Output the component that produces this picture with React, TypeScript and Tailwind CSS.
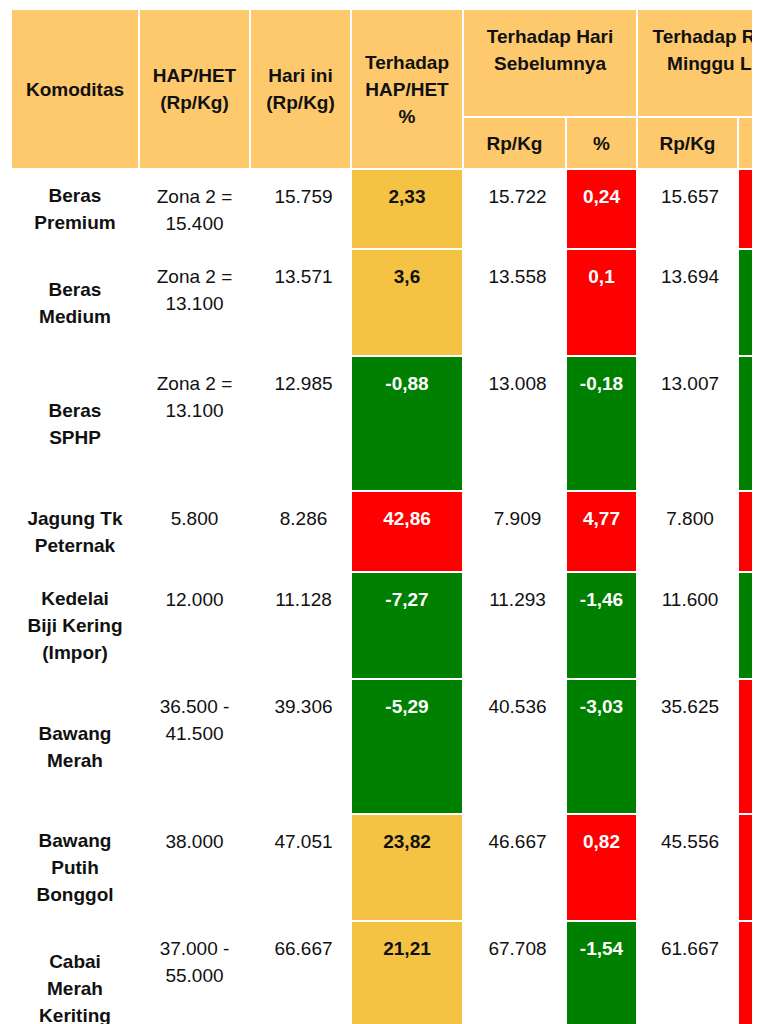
import React from "react"

type Tone = "yellow" | "red" | "green"

interface Pct {
  v: string
  tone: Tone
}

interface Row {
  name: string[]
  hap: string[]
  today: string
  het: Pct
  prev: string
  prevPct: Pct
  week: string
  weekPct: Pct
  h: string
}

const rows: Row[] = [
  { name: ["Beras", "Premium"], hap: ["Zona 2 =", "15.400"], today: "15.759", het: { v: "2,33", tone: "yellow" }, prev: "15.722", prevPct: { v: "0,24", tone: "red" }, week: "15.657", weekPct: { v: "0,65", tone: "red" }, h: "h-[78px]" },
  { name: ["Beras", "Medium"], hap: ["Zona 2 =", "13.100"], today: "13.571", het: { v: "3,6", tone: "yellow" }, prev: "13.558", prevPct: { v: "0,1", tone: "red" }, week: "13.694", weekPct: { v: "-0,9", tone: "green" }, h: "h-[105px]" },
  { name: ["Beras", "SPHP"], hap: ["Zona 2 =", "13.100"], today: "12.985", het: { v: "-0,88", tone: "green" }, prev: "13.008", prevPct: { v: "-0,18", tone: "green" }, week: "13.007", weekPct: { v: "-0,17", tone: "green" }, h: "h-[133px]" },
  { name: ["Jagung Tk", "Peternak"], hap: ["5.800"], today: "8.286", het: { v: "42,86", tone: "red" }, prev: "7.909", prevPct: { v: "4,77", tone: "red" }, week: "7.800", weekPct: { v: "6,23", tone: "red" }, h: "h-[79px]" },
  { name: ["Kedelai", "Biji Kering", "(Impor)"], hap: ["12.000"], today: "11.128", het: { v: "-7,27", tone: "green" }, prev: "11.293", prevPct: { v: "-1,46", tone: "green" }, week: "11.600", weekPct: { v: "-4,07", tone: "green" }, h: "h-[105px]" },
  { name: ["Bawang", "Merah"], hap: ["36.500 -", "41.500"], today: "39.306", het: { v: "-5,29", tone: "green" }, prev: "40.536", prevPct: { v: "-3,03", tone: "green" }, week: "35.625", weekPct: { v: "10,3", tone: "red" }, h: "h-[133px]" },
  { name: ["Bawang", "Putih", "Bonggol"], hap: ["38.000"], today: "47.051", het: { v: "23,82", tone: "yellow" }, prev: "46.667", prevPct: { v: "0,82", tone: "red" }, week: "45.556", weekPct: { v: "3,28", tone: "red" }, h: "h-[105px]" },
  { name: ["Cabai", "Merah", "Keriting"], hap: ["37.000 -", "55.000"], today: "66.667", het: { v: "21,21", tone: "yellow" }, prev: "67.708", prevPct: { v: "-1,54", tone: "green" }, week: "61.667", weekPct: { v: "8,11", tone: "red" }, h: "h-[133px]" },
]

const toneClass: Record<Tone, string> = {
  yellow: "bg-[#f5c344] text-[#111]",
  red: "bg-[#ff0000] text-white",
  green: "bg-[#008000] text-white",
}

const head = "bg-[#fec96c] font-bold text-[#111] text-center"
const cell = "align-top text-center pt-[13px] px-0"

function Lines({ items }: { items: string[] }) {
  return (
    <>
      {items.map((t, i) => (
        <React.Fragment key={i}>
          {i > 0 && <br />}
          {t}
        </React.Fragment>
      ))}
    </>
  )
}

function PctCell({ p }: { p: Pct }) {
  return <td className={`${cell} font-bold ${toneClass[p.tone]}`}>{p.v}</td>
}

export default function App() {
  return (
    <div className="min-h-screen bg-white pl-[10px] pt-[8px] font-['Liberation_Sans',Arial,sans-serif] text-[19px] leading-[27px] text-[#111]">
      <div className="w-[742px] overflow-hidden">
        <table className="table-fixed border-separate border-spacing-[2px] w-[800px]">
          <colgroup>
            <col className="w-[126px]" />
            <col className="w-[109px]" />
            <col className="w-[99px]" />
            <col className="w-[110px]" />
            <col className="w-[101px]" />
            <col className="w-[69px]" />
            <col className="w-[99px]" />
            <col className="w-[69px]" />
          </colgroup>
          <thead>
            <tr className="h-[106px]">
              <th rowSpan={2} className={`${head} align-middle`}>Komoditas</th>
              <th rowSpan={2} className={`${head} align-middle`}>HAP/HET<br />(Rp/Kg)</th>
              <th rowSpan={2} className={`${head} align-middle`}>Hari ini<br />(Rp/Kg)</th>
              <th rowSpan={2} className={`${head} align-middle`}>Terhadap<br />HAP/HET<br />%</th>
              <th colSpan={2} className={`${head} align-top pt-[13px]`}>Terhadap Hari<br />Sebelumnya</th>
              <th colSpan={2} className={`${head} align-top pt-[13px] whitespace-nowrap`}>Terhadap Rata2<br />Minggu Lalu</th>
            </tr>
            <tr className="h-[50px]">
              <th className={`${head} align-middle`}>Rp/Kg</th>
              <th className={`${head} align-middle`}>%</th>
              <th className={`${head} align-middle`}>Rp/Kg</th>
              <th className={`${head} align-middle`}>%</th>
            </tr>
          </thead>
          <tbody>
            {rows.map((r) => (
              <tr key={r.name.join(" ")} className={r.h}>
                <td className="align-middle text-center font-bold whitespace-nowrap">
                  <Lines items={r.name} />
                </td>
                <td className={`${cell} whitespace-nowrap`}>
                  <Lines items={r.hap} />
                </td>
                <td className={`${cell} pl-[6px]`}>{r.today}</td>
                <PctCell p={r.het} />
                <td className={`${cell} pl-[6px]`}>{r.prev}</td>
                <PctCell p={r.prevPct} />
                <td className={`${cell} pl-[5px]`}>{r.week}</td>
                <PctCell p={r.weekPct} />
              </tr>
            ))}
          </tbody>
        </table>
      </div>
    </div>
  )
}
